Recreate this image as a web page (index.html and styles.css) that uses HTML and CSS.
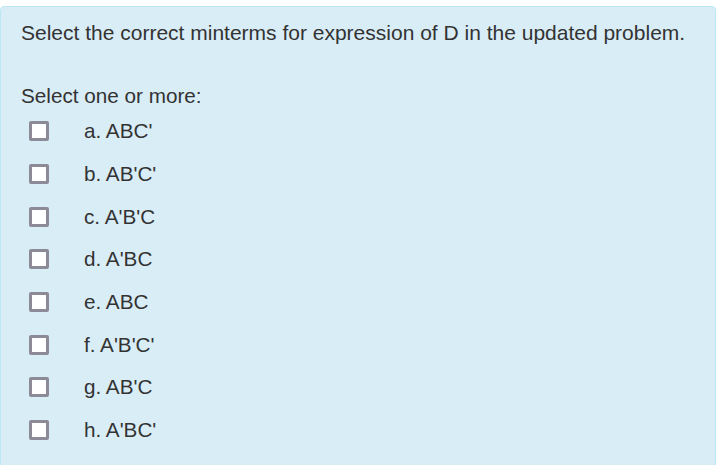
FILE: index.html
```html
<!DOCTYPE html>
<html lang="en">
<head>
    <meta charset="UTF-8">
    <title>Question</title>
    <link rel="stylesheet" href="styles.css">
</head>
<body>
    <div class="question">
        <p class="qtext">Select the correct minterms for expression of D in the updated problem.</p>
        <p class="prompt">Select one or more:</p>
        <div class="answers">
            <label class="option"><span class="box"></span><span class="text">a. ABC'</span></label>
            <label class="option"><span class="box"></span><span class="text">b. AB'C'</span></label>
            <label class="option"><span class="box"></span><span class="text">c. A'B'C</span></label>
            <label class="option"><span class="box"></span><span class="text">d. A'BC</span></label>
            <label class="option"><span class="box"></span><span class="text">e. ABC</span></label>
            <label class="option"><span class="box"></span><span class="text">f. A'B'C'</span></label>
            <label class="option"><span class="box"></span><span class="text">g. AB'C</span></label>
            <label class="option"><span class="box"></span><span class="text">h. A'BC'</span></label>
        </div>
    </div>
</body>
</html>
```
FILE: styles.css
```css
body {
    margin: 0;
    background: #fff;
    font-family: "Liberation Sans", Arial, sans-serif;
    font-size: 20.7px;
    line-height: 28px;
    color: #333;
}
.question {
    box-sizing: border-box;
    width: 716px;
    margin-top: 6px;
    padding: 12px 0 40px 20px;
    background: #d9edf7;
    border: 1px solid #bce8f1;
    border-radius: 4px;
}
.qtext {
    margin: 0 0 35px 0;
    font-size: 21px;
}
.prompt {
    margin: 0;
}
.option {
    display: flex;
    align-items: center;
    height: 42.7px;
}
.box {
    box-sizing: border-box;
    width: 20px;
    height: 20px;
    margin-left: 8px;
    margin-right: 35px;
    background: #fff;
    border: 3px solid #8c8a97;
    border-radius: 2px;
}
```
